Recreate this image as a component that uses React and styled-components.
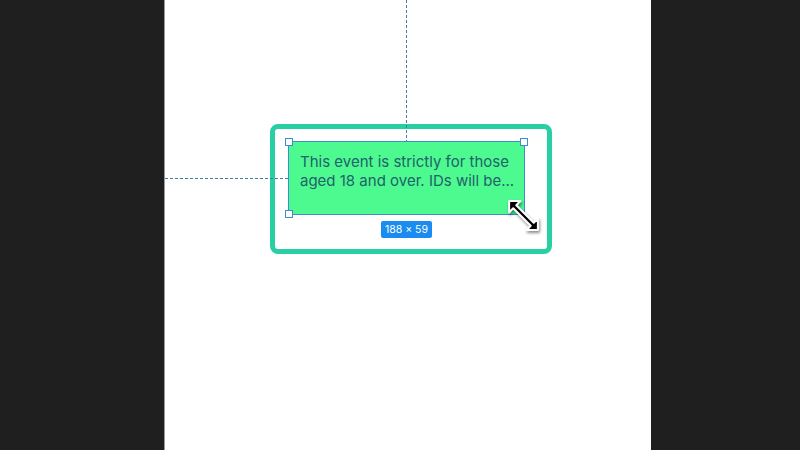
import React from 'react';
import styled, { createGlobalStyle } from 'styled-components';

const Global = createGlobalStyle`
  html, body {
    margin: 0;
    padding: 0;
    background: #1f1f1f;
    font-family: Inter, "Noto Sans", sans-serif;
  }
`;

const Screen = styled.div`
  display: flex;
  width: 800px;
  height: 450px;
  overflow: hidden;
  background: #1f1f1f;
`;

const Side = styled.div`
  width: ${props => props.w}px;
  flex-shrink: 0;
  background: #1f1f1f;
`;

const Canvas = styled.div`
  position: relative;
  width: 487px;
  flex-shrink: 0;
  background: #ffffff;
  border-left: 1px solid #9a9a9a;
  box-sizing: border-box;
`;

const GuideV = styled.div`
  position: absolute;
  left: 241px;
  top: 0;
  width: 1px;
  height: 141px;
  background: repeating-linear-gradient(to bottom, #3d7fa8 0 3px, transparent 3px 5px);
`;

const GuideH = styled.div`
  position: absolute;
  left: 0;
  top: 178px;
  width: 123px;
  height: 1px;
  background: repeating-linear-gradient(to right, #3d7fa8 0 3px, transparent 3px 5px);
`;

const Frame = styled.div`
  position: absolute;
  left: 105px;
  top: 124px;
  width: 282px;
  height: 130px;
  box-sizing: border-box;
  border: 5px solid #27cfa3;
  border-radius: 8px;
  background: #ffffff;
  padding: 12px 0 0 13px;
  display: flex;
  flex-direction: column;
  align-items: flex-start;
`;

const TextBox = styled.div`
  position: relative;
  width: 237px;
  height: 74px;
  box-sizing: border-box;
  background: #4cfa90;
  border: 1px solid #3f8bd2;
  padding: 10px 8px 0 11px;
  color: #23626a;
  font-size: 15px;
  line-height: 19px;
  white-space: nowrap;
`;

const Handle = styled.span`
  position: absolute;
  width: 6px;
  height: 6px;
  background: #ffffff;
  border: 1px solid #3f8bd2;
  ${props => (props.top ? 'top: -4px;' : 'bottom: -4px;')}
  ${props => (props.left ? 'left: -4px;' : 'right: -4px;')}
`;

const Badge = styled.div`
  align-self: flex-start;
  margin: 6px 0 0 93px;
  height: 17px;
  padding: 0 4px;
  display: flex;
  align-items: center;
  background: #1a8cf0;
  color: #ffffff;
  border-radius: 2px;
  font-size: 10.5px;
`;

const Cursor = styled.svg`
  position: absolute;
  left: 341px;
  top: 198px;
  width: 35px;
  height: 35px;
  filter: drop-shadow(1px 2px 1.5px rgba(0, 0, 0, 0.45));
`;

const ResizeCursor = () => (
  <Cursor viewBox="0 0 34 34">
    <path
      d="M3 3 L14 3 L10 7 L27 24 L31 20 L31 31 L20 31 L24 27 L7 10 L3 14 Z"
      fill="#000"
      stroke="#fff"
      strokeWidth="2"
      strokeLinejoin="round"
    />
  </Cursor>
);

export default function App() {
  return (
    <>
      <Global />
      <Screen>
        <Side w={164} />
        <Canvas>
          <Frame>
            <TextBox>
              This event is strictly for those
              <br />
              aged 18 and over. IDs will be...
              <Handle top left />
              <Handle top />
              <Handle left />
            </TextBox>
            <Badge>188 × 59</Badge>
          </Frame>
          <GuideV />
          <GuideH />
          <ResizeCursor />
        </Canvas>
        <Side w={149} />
      </Screen>
    </>
  );
}
